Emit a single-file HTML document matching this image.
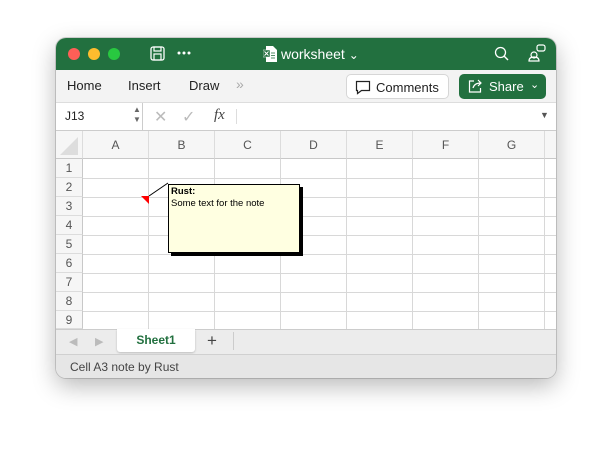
<!DOCTYPE html><html><head><style>
*{margin:0;padding:0;box-sizing:border-box}
body{width:612px;height:452px;background:#fff;font-family:"Liberation Sans",sans-serif;position:relative;overflow:hidden}
.win{position:absolute;left:56px;top:38px;width:500px;height:340px;border-radius:10px;overflow:hidden;background:#f3f3f3;box-shadow:0 8px 24px rgba(0,0,0,.28),0 0 0 1px rgba(0,0,0,.15)}
.a{position:absolute}
.title{left:0;top:0;width:500px;height:32px;background:#22703f}
.dot{width:12px;height:12px;border-radius:50%;top:10px}
.tb{top:32px;height:32px;width:500px;background:#f3f3f3;font-size:13px;color:#222}
.fb{top:64px;height:29px;width:500px;background:#fff;border-top:1px solid #ddd;border-bottom:1px solid #ccc}
.grid{top:93px;left:0;width:500px;height:198px;background:#fff}
.ch{top:0;height:28px;border-right:1px solid #dcdcdc;border-bottom:1px solid #c8c8c8;background:#f6f6f6;text-align:center;line-height:28px;font-size:12px;color:#555}
.rh{left:0;width:27px;height:19px;border-bottom:1px solid #dcdcdc;border-right:1px solid #c8c8c8;background:#f6f6f6;text-align:center;font-size:12px;line-height:19px;color:#555}
.vl{width:1px;background:#d8d8d8;top:28px;height:170px}
.hl{height:1px;background:#d8d8d8;left:27px;width:473px}
</style></head><body>
<div class="win">
<div class="a title">
<div class="a dot" style="left:12px;background:#fe5f57"></div>
<div class="a dot" style="left:32px;background:#febc2e"></div>
<div class="a dot" style="left:52px;background:#28c840"></div>
<svg class="a" style="left:94px;top:8px" width="15" height="15" viewBox="0 0 15 15"><rect x="1" y="1" width="13" height="13" rx="2" fill="none" stroke="#fff" stroke-width="1.3"/><rect x="4" y="1" width="7" height="4" fill="none" stroke="#fff" stroke-width="1.2"/><rect x="4" y="8" width="7" height="6" fill="none" stroke="#fff" stroke-width="1.2"/></svg>
<svg class="a" style="left:121px;top:13px" width="14" height="4"><circle cx="2" cy="2" r="1.5" fill="#fff"/><circle cx="7" cy="2" r="1.5" fill="#fff"/><circle cx="12" cy="2" r="1.5" fill="#fff"/></svg>
<svg class="a" style="left:207px;top:8px" width="14" height="16"><path d="M3 0h7l4 4v12H3z" fill="#fff"/><rect x="0" y="4" width="7" height="7" fill="#1d6b3a" stroke="#fff" stroke-width=".5"/><path d="M1.5 5.5l4 4M5.5 5.5l-4 4" stroke="#fff" stroke-width="1"/><path d="M8 7h4M8 9.5h4M8 12h4" stroke="#1d6b3a" stroke-width=".8"/></svg>
<div class="a" style="left:225px;top:8px;color:#fff;font-size:14px">worksheet <span style="font-size:12px">⌄</span></div>
<svg class="a" style="left:438px;top:8px" width="16" height="16"><circle cx="6.5" cy="6.5" r="5" fill="none" stroke="#fff" stroke-width="1.3"/><line x1="10" y1="10" x2="14" y2="14" stroke="#fff" stroke-width="1.4"/></svg>
<svg class="a" style="left:472px;top:6px" width="18" height="18"><circle cx="6" cy="11" r="3" fill="none" stroke="#fff" stroke-width="1.2"/><path d="M1 17c0-3 2-4 5-4s5 1 5 4z" fill="none" stroke="#fff" stroke-width="1.2"/><rect x="9" y="1" width="8" height="6" rx="2" fill="none" stroke="#fff" stroke-width="1.2"/></svg>
</div>
<div class="a tb">
<div class="a" style="left:11px;top:8px">Home</div>
<div class="a" style="left:72px;top:8px">Insert</div>
<div class="a" style="left:133px;top:8px">Draw</div>
<div class="a" style="left:180px;top:6px;color:#aaa;font-size:14px">»</div>
<div class="a" style="left:290px;top:4px;width:103px;height:25px;background:#fff;border:1px solid #d6d6d6;border-radius:5px"><svg class="a" style="left:8px;top:5px" width="16" height="15"><path d="M1.5 1.5h13v9h-8l-4 3v-3h-1z" fill="none" stroke="#222" stroke-width="1.2"/></svg><span class="a" style="left:29px;top:5px;font-size:13px">Comments</span></div>
<div class="a" style="left:403px;top:4px;width:87px;height:25px;background:#22703f;border-radius:5px;color:#fff"><svg class="a" style="left:9px;top:5px" width="15" height="14"><path d="M6 2H1.5v11h11V9" fill="none" stroke="#fff" stroke-width="1.2"/><path d="M5 9c1-4 4-5 8-5M10 1l3 3-3 3" fill="none" stroke="#fff" stroke-width="1.2"/></svg><span class="a" style="left:30px;top:5px;font-size:13px">Share</span><span class="a" style="left:71px;top:4px;font-size:11px">⌄</span></div>
</div>
<div class="a fb">
<div class="a" style="left:0;top:0;width:87px;height:27px;border-right:1px solid #ccc;font-size:12px;line-height:27px;padding-left:9px;color:#222">J13</div>
<div class="a" style="left:77px;top:2px;font-size:8px;color:#666;line-height:10px">▲<br>▼</div>
<div class="a" style="left:98px;top:4px;font-size:16px;color:#bbb">✕</div>
<div class="a" style="left:126px;top:4px;font-size:16px;color:#bbb">✓</div>
<div class="a" style="left:158px;top:4px;font-size:15px;font-style:italic;font-family:'Liberation Serif',serif;color:#444">fx</div>
<div class="a" style="left:180px;top:6px;width:1px;height:15px;background:#ddd"></div>
<div class="a" style="left:484px;top:7px;font-size:9px;color:#555">▼</div>
</div>
<div class="a grid">
<div class="a ch" style="left:0;width:27px"><svg width="26" height="27"><path d="M22 6V24H4z" fill="#ddd"/></svg></div>
<div class="a ch" style="left:27px;width:66px">A</div>
<div class="a ch" style="left:93px;width:66px">B</div>
<div class="a ch" style="left:159px;width:66px">C</div>
<div class="a ch" style="left:225px;width:66px">D</div>
<div class="a ch" style="left:291px;width:66px">E</div>
<div class="a ch" style="left:357px;width:66px">F</div>
<div class="a ch" style="left:423px;width:66px">G</div>
<div class="a ch" style="left:489px;width:11px;border-right:0"></div>
<div class="a rh" style="top:28px">1</div><div class="a rh" style="top:47px">2</div><div class="a rh" style="top:66px">3</div><div class="a rh" style="top:85px">4</div><div class="a rh" style="top:104px">5</div><div class="a rh" style="top:123px">6</div><div class="a rh" style="top:142px">7</div><div class="a rh" style="top:161px">8</div><div class="a rh" style="top:180px;height:18px">9</div>
<div class="a vl" style="left:92px"></div><div class="a vl" style="left:158px"></div><div class="a vl" style="left:224px"></div><div class="a vl" style="left:290px"></div><div class="a vl" style="left:356px"></div><div class="a vl" style="left:422px"></div><div class="a vl" style="left:488px"></div>
<div class="a hl" style="top:47px"></div><div class="a hl" style="top:66px"></div><div class="a hl" style="top:85px"></div><div class="a hl" style="top:104px"></div><div class="a hl" style="top:123px"></div><div class="a hl" style="top:142px"></div><div class="a hl" style="top:161px"></div><div class="a hl" style="top:180px"></div>
<svg class="a" style="left:84px;top:60px" width="30" height="15"><path d="M1 5h8v8z" fill="#f00"/></svg>
<svg class="a" style="left:84px;top:46px" width="30" height="20"><line x1="9" y1="19" x2="28" y2="6" stroke="#000"/></svg>
<div class="a" style="left:115px;top:56px;width:132px;height:69px;background:#000"></div>
<div class="a" style="left:112px;top:53px;width:132px;height:69px;background:#ffffe1;border:1px solid #000;font-size:9.5px;padding:1px 2px;line-height:12px;color:#000"><b>Rust:</b><br>Some text for the note</div>
</div>
<div class="a" style="top:291px;left:0;width:500px;height:25px;background:#ececec;border-top:1px solid #ccc">
<span class="a" style="left:13px;top:5px;font-size:11px;color:#bbb">◀</span><span class="a" style="left:39px;top:5px;font-size:11px;color:#bbb">▶</span>
<div class="a" style="left:61px;top:-1px;width:78px;height:23px;background:#fff;border-radius:0 0 3px 3px;box-shadow:0 1px 2px rgba(0,0,0,.2);text-align:center;line-height:22px;font-size:12px;font-weight:bold;color:#22703f">Sheet1</div>
<span class="a" style="left:151px;top:1px;font-size:17px;color:#444">+</span>
<div class="a" style="left:177px;top:2px;width:1px;height:18px;background:#ccc"></div>
</div>
<div class="a" style="top:316px;left:0;width:500px;height:24px;background:#e6e6e6;border-top:1px solid #d0d0d0;font-size:12px;color:#444;padding:5px 0 0 14px">Cell A3 note by Rust</div>
</div>
</body></html>
